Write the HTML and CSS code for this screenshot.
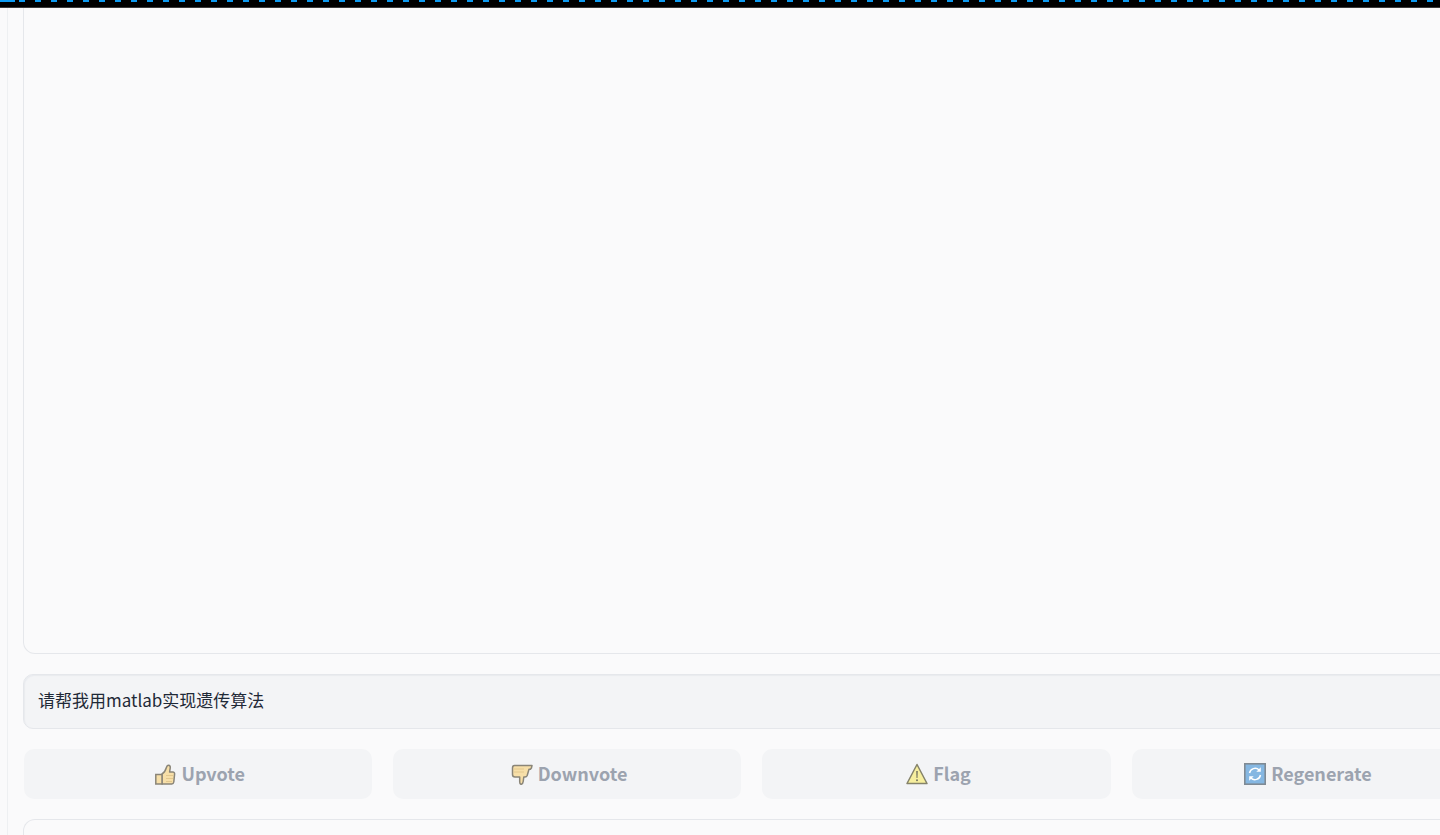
FILE: index.html
```html
<!DOCTYPE html>
<html lang="en">
<head>
    <meta charset="UTF-8">
    <meta name="viewport" content="width=device-width, initial-scale=1.0">
    <title>Chatbot</title>
    <link rel="stylesheet" href="styles.css">
</head>
<body>
    <div class="top-bar"></div>
    <div class="page">
        <div class="column">
            <div class="chat-box"></div>
            <div class="prompt">请帮我用matlab实现遗传算法</div>
            <div class="vote-row">
                <button class="vote-btn">
                    <svg class="icon" viewBox="0 -1 22 22">
                        <path d="M8 10c1.800-1 3.400-3.200 4.200-6 .4-1.400 1-2.800 2.300-2.800 1.500 0 2 1.500 1.700 3l-.6 3.800h3.200c1.300 0 2 1 1.800 2.200l-.8 7.800c-.2 1.200-1 2-2 2H8z" fill="#f7dfa8" stroke="#8a8578" stroke-width="1.500" stroke-linejoin="round"/>
                        <path d="M1.800 10.500H8V20H1.800z" fill="#f7dfa8" stroke="#8a8578" stroke-width="1.500"/>
                        <path d="M12 11.500h7M12 14.500h7M12 17.500h6" stroke="#e3c88e" stroke-width="1"/>
                    </svg>
                    <span>Upvote</span>
                </button>
                <button class="vote-btn">
                    <svg class="icon" viewBox="0 -1 22 22">
                        <path d="M3.500 1.500h17.500l-.6 2.500-1 1.200H18l-1.800 6.300c-.4 1-1.200 1.500-2.200 1.500h-1.200l-.6 4.500c-.2 1.600-.9 2.800-2.100 2.800-1 0-1.400-1-1.400-2.500v-4.800H4c-1.500 0-2.500-.8-2.500-2.500V4c0-1.500.8-2.500 2-2.500z" fill="#f7dfa8" stroke="#8a8578" stroke-width="1.500" stroke-linejoin="round"/>
                        <path d="M3 5h10M3 8h10" stroke="#e3c88e" stroke-width="1"/>
                    </svg>
                    <span>Downvote</span>
                </button>
                <button class="vote-btn">
                    <svg class="icon" viewBox="0 0 22 22">
                        <path d="M11 1.500 21 20.500H1z" fill="#f7ef9e" stroke="#85836a" stroke-width="1.500" stroke-linejoin="round"/>
                        <path d="M10.200 8h1.600l-.3 7h-1z" fill="#77755f"/>
                        <circle cx="11" cy="17.300" r="1" fill="#77755f"/>
                    </svg>
                    <span>Flag</span>
                </button>
                <button class="vote-btn">
                    <svg class="icon" viewBox="0 0 22 22">
                        <rect x="0.800" y="0.800" width="20.400" height="20.400" fill="#85b7e2" stroke="#7f8a94" stroke-width="1.600"/>
                        <path d="M5.500 10a5.700 5.700 0 0 1 9.600-3M16.500 12a5.700 5.700 0 0 1-9.600 3" fill="none" stroke="#fff" stroke-width="1.500"/>
                        <path d="M16.800 4.300v4.500h-4.500zM5.200 17.700v-4.500h4.500z" fill="#fff"/>
                    </svg>
                    <span>Regenerate</span>
                </button>
            </div>
            <div class="next-box"></div>
        </div>
    </div>
</body>
</html>
```

FILE: styles.css
```css
html, body {
    height: 100%;
}
body {
    margin: 0;
    overflow: hidden;
    background-color: #fafafb;
    font-family: "Noto Sans CJK SC", "Noto Sans", sans-serif;
}
.top-bar {
    height: 7px;
    background-color: #000;
    background-image: linear-gradient(to right, #0d9bf2 0, #0d9bf2 15px, transparent 15px), repeating-linear-gradient(to right, transparent 0, transparent 3px, #0d9bf2 3px, #0d9bf2 9px, transparent 9px, transparent 16px);
    background-size: 15px 2px, 100% 2px;
    background-position: 0 0, 16px 0;
    background-repeat: no-repeat;
    border-bottom: 1px solid #3a3a3a;
}
.page {
    margin-left: 7px;
    width: 1600px;
    padding-left: 15px;
    border-left: 1px solid #eef0f2;
    height: 827px;
}
.column {
    width: 1500px;
    display: flex;
    flex-direction: column;
}
.chat-box {
    height: 645px;
    border: 1px solid #e5e7eb;
    border-top: none;
    border-radius: 0 0 0 12px;
}
.prompt {
    margin-top: 20px;
    height: 55px;
    box-sizing: border-box;
    padding: 0 14px 5px 14px;
    display: flex;
    align-items: center;
    font-size: 17px;
    color: #1f2937;
    background-color: #f3f4f6;
    border: 1px solid #e5e7eb;
    border-radius: 10px;
    box-shadow: inset 1px 1px 1px #e9ebef;
}
.vote-row {
    margin-top: 20px;
    margin-left: 0.500px;
    display: grid;
    grid-template-columns: repeat(4, 348.500px);
    column-gap: 20.900px;
}
.vote-btn {
    height: 50px;
    display: flex;
    align-items: center;
    justify-content: center;
    gap: 5px;
    padding: 0 0 0 4px;
    border: none;
    border-radius: 10px;
    background-color: #f3f4f6;
    color: #9ca3af;
    font-family: inherit;
    font-size: 18px;
    font-weight: 600;
    cursor: pointer;
}
.vote-btn span {
    padding-bottom: 2px;
}
.icon {
    width: 22px;
    height: 22px;
}
.next-box {
    margin-top: 20px;
    height: 60px;
    border: 1px solid #e5e7eb;
    border-bottom: none;
    border-radius: 12px 12px 0 0;
}
```
